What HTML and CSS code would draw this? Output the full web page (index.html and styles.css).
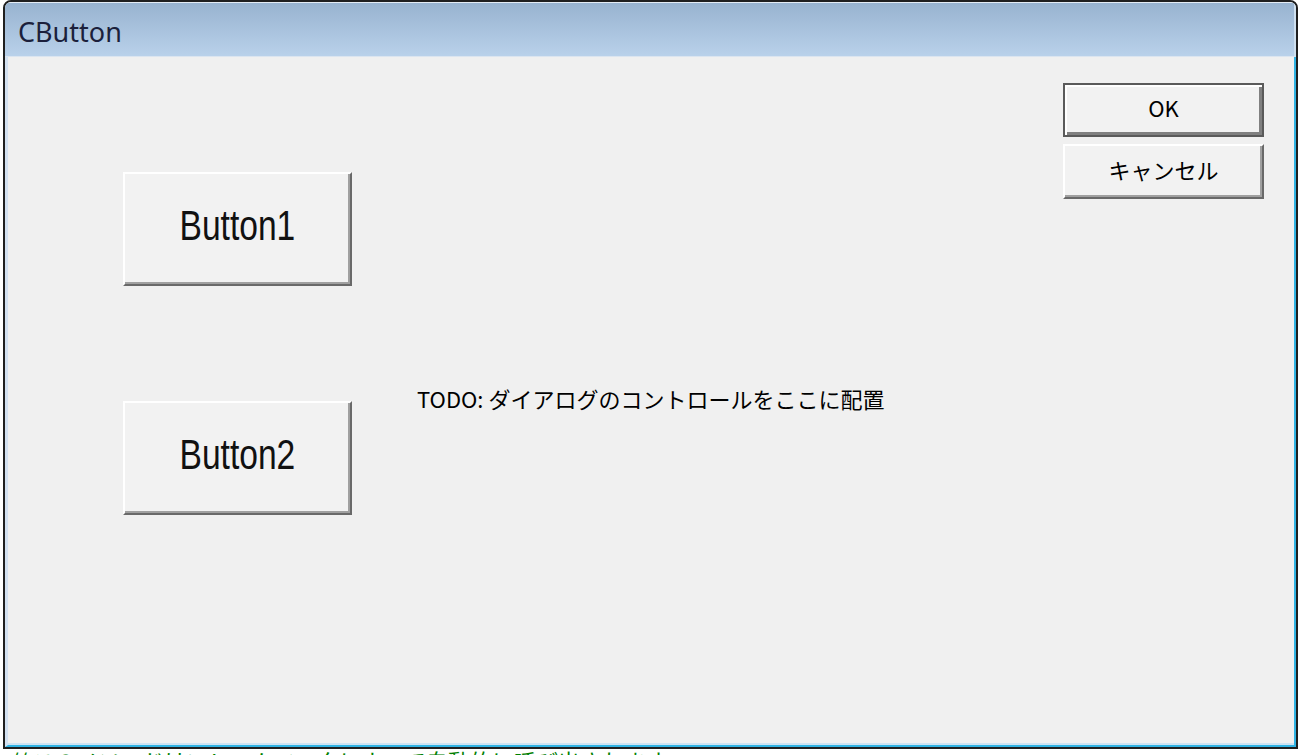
FILE: index.html
```html
<!DOCTYPE html>
<html lang="ja">

<head>
    <meta charset="UTF-8">
    <meta name="viewport" content="width=device-width, initial-scale=1.0">
    <title>CButton</title>
    <link rel="stylesheet" href="styles.css">
</head>

<body>
    <div class="dialog">
        <div class="title-bar">
            <span class="title">CButton</span>
        </div>
        <div class="client">
            <div class="left-buttons">
                <button class="push-button"><span class="big-label">Button1</span></button>
                <button class="push-button"><span class="big-label">Button2</span></button>
            </div>
            <p class="static-text">TODO: ダイアログのコントロールをここに配置</p>
            <div class="dialog-buttons">
                <button class="dlg-button default">OK</button>
                <button class="dlg-button">キャンセル</button>
            </div>
        </div>
    </div>
    <!-- editor text peeking out under the dialog -->
    <p class="behind-text">// このメソッドはフレームワークによって自動的に呼び出されます。</p>
</body>

</html>
```

FILE: styles.css
```css
html,
body {
    margin: 0;
    height: 100%;
    overflow: hidden;
    background-color: #fff;
}

body {
    font-family: "Noto Sans CJK JP", sans-serif;
}

.dialog {
    margin-left: 3px;
    width: 1295px;
    height: 749px;
    box-sizing: border-box;
    border: 2px solid #1f1f1f;
    border-radius: 8px 8px 0 0;
    background-color: #f0f0f0;
    display: flex;
    flex-direction: column;
    overflow: hidden;
}

.title-bar {
    height: 55px;
    box-sizing: border-box;
    padding: 15px 0 0 13px;
    border-top: 1px solid #e4ecf5;
    border-bottom: 1px solid #dbe5f0;
    border-right: 2px solid #cfe0ef;
    background: linear-gradient(#98b3d0, #b9d1ea);
}

.title {
    font-family: "Noto Sans", sans-serif;
    font-size: 27px;
    line-height: 27px;
    color: #1b1f3b;
}

.client {
    flex: 1;
    display: flex;
    border-left: 3px solid #d3e1f1;
    border-right: 2px solid #30b3e3;
    border-bottom: 2px solid #30b3e3;
    box-shadow: inset 0 -2px 0 #cde3f3;
}

.left-buttons {
    display: flex;
    flex-direction: column;
    gap: 115px;
    margin-left: 115px;
    padding-top: 115px;
}

.push-button {
    width: 229px;
    height: 114px;
    padding: 0 0 6px;
    background-color: #f2f2f2;
    border: 2px solid;
    border-color: #fff #696969 #696969 #fff;
    box-shadow: inset -2px -2px 0 #a0a0a0;
    display: flex;
    justify-content: center;
    align-items: center;
    cursor: pointer;
}

.big-label {
    display: inline-block;
    font-family: "Liberation Sans", sans-serif;
    font-size: 42px;
    color: #111;
    transform: scaleX(0.8);
}

.static-text {
    margin: 330px 0 0 65px;
    font-size: 22px;
    line-height: 22px;
    color: #000;
    white-space: nowrap;
}

.dialog-buttons {
    display: flex;
    flex-direction: column;
    gap: 7px;
    margin: 0 30px 0 auto;
    padding-top: 26px;
}

.dlg-button {
    width: 201px;
    height: 55px;
    padding: 0 0 6px;
    font-family: "Noto Sans CJK JP", sans-serif;
    font-size: 22px;
    color: #000;
    background-color: #f2f2f2;
    border: 2px solid;
    border-color: #fff #696969 #696969 #fff;
    box-shadow: inset -2px -2px 0 #a0a0a0;
    cursor: pointer;
}

.dlg-button.default {
    height: 54px;
    border-color: #5a5a5a;
    box-shadow: inset 2px 2px 0 #fff, inset -3px -3px 0 #808080;
}

.behind-text {
    margin: 0 0 0 10px;
    font-size: 22px;
    line-height: 22px;
    color: #008000;
    white-space: nowrap;
}
```
